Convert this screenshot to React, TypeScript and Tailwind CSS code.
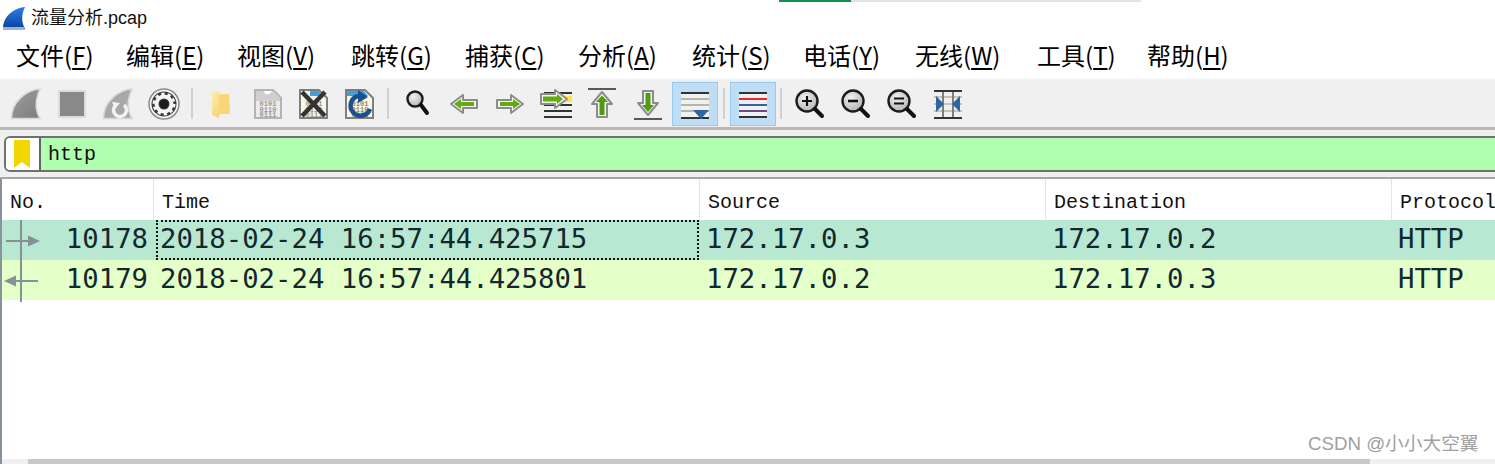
import React from "react";

const Box = ({ children, active, cls = "" }: { children: React.ReactNode; active?: boolean; cls?: string }) => (
  <div className={`w-[46px] h-[44px] flex items-center justify-center shrink-0 border ${active ? "bg-[#bfddf5] border-[#95c9f1]" : "border-transparent"} ${cls}`}>
    <svg width="32" height="32" viewBox="0 0 32 32" className="overflow-visible">{children}</svg>
  </div>
);
const Sep = ({ cls }: { cls: string }) => (
  <div className={`h-[31px] flex justify-center shrink-0 ${cls}`}><div className="w-[2px] bg-[#d0d0d0]" /></div>
);

const FIN = "M30 1 C17 2 1.5 13 1.5 30.5 L30 30.5 C25 22 25 12 30 1 Z";

const Fin = () => (
  <g>
    <defs>
      <linearGradient id="fg" x1="0" y1="0" x2="1" y2="1">
        <stop offset="0" stopColor="#a0a0a0" /><stop offset="1" stopColor="#7c7c7c" />
      </linearGradient>
    </defs>
    <path d={FIN} fill="url(#fg)" stroke="#d8d8d8" strokeWidth="1.6" />
  </g>
);
const Stop = () => (
  <g><rect x="3" y="3" width="26" height="26" fill="#8a8a8a" stroke="#dcdcdc" strokeWidth="2" /></g>
);
const Restart = () => (
  <g>
    <path d={FIN} fill="#a8a8a8" stroke="#d8d8d8" strokeWidth="1.6" />
    <path d="M22 17 A6.5 6.5 0 1 1 13 18" fill="none" stroke="#f2f2f2" strokeWidth="3.5" />
    <path d="M10 14 L18 15 L13 21 Z" fill="#f2f2f2" />
  </g>
);
const Gear = () => (
  <g>
    <circle cx="16" cy="16" r="15" fill="#f5f5f5" stroke="#8c8c8c" strokeWidth="1.5" />
    <circle cx="16" cy="16" r="12.5" fill="#3a3a3a" />
    <circle cx="16" cy="16" r="7.5" fill="none" stroke="#f4f4f4" strokeWidth="4" />
    <circle cx="16" cy="16" r="10" fill="none" stroke="#f4f4f4" strokeWidth="3" strokeDasharray="3.3 3" />
    <circle cx="16" cy="16" r="4.5" fill="#1c1c1c" />
  </g>
);
const Folder = () => (
  <g>
    <defs>
      <linearGradient id="fd" x1="0" y1="0" x2="1" y2="1">
        <stop offset="0" stopColor="#fdeeb0" /><stop offset="1" stopColor="#f5c655" />
      </linearGradient>
    </defs>
    <path d="M6 3 L13 3 L15 6 L23 6 L23 26 L13 26 L13 30 L6 27 Z" fill="url(#fd)" />
    <path d="M13 7 L23 6 L24 26 L13 26 Z" fill="#f8d778" />
  </g>
);
const DocBits = ({ color }: { color: string }) => (
  <text x="16" y="18" fontFamily="'Liberation Mono', monospace" fontSize="7" fontWeight="700" fill={color} textAnchor="middle">
    <tspan x="16" dy="0">0101</tspan>
    <tspan x="16" dy="5.6">0110</tspan>
    <tspan x="16" dy="5.6">0111</tspan>
  </text>
);
const Doc = () => (
  <g>
    <path d="M3 2 L21 2 L29 10 L29 30 L3 30 Z" fill="#ececec" stroke="#b4b4b4" strokeWidth="2" />
    <path d="M4 3 L12 3 C12 8 18 7 20 3 L21 3 L28 10 L28 13 L4 13 Z" fill="#cfcfcf" />
    <path d="M12 3 C12 7 18 7 20 3 Z" fill="#fff" />
    <DocBits color="#9a9a9a" />
  </g>
);
const CloseDoc = () => (
  <g>
    <path d="M2 2 L21 2 L29 10 L29 30 L2 30 Z" fill="#f7f7e4" stroke="#7f7f7f" strokeWidth="2" />
    <path d="M12 3 L21 3 L24 8 L12 8 Z" fill="#3fa0e0" />
    <DocBits color="#9a9a88" />
    <path d="M4 4 L27 28 M27 4 L4 28" stroke="#333" strokeWidth="4.5" />
  </g>
);
const ReloadDoc = () => (
  <g>
    <path d="M2 2 L21 2 L29 10 L29 30 L2 30 Z" fill="#f7f7e4" stroke="#7f7f7f" strokeWidth="2" />
    <path d="M3 3 L20 3 L24 8 L3 8 Z" fill="#3fa0e0" />
    <DocBits color="#8a8a78" />
    <path d="M26 21 A10 10 0 1 1 14 8" fill="none" stroke="#1c4f8f" strokeWidth="4.5" />
    <path d="M14 2 L24 9 L14 15 Z" fill="#1c4f8f" />
  </g>
);
const Lens = ({ children, small }: { children?: React.ReactNode; small?: boolean }) => (
  <g>
    <defs>
      <radialGradient id="ln" cx="0.4" cy="0.35" r="0.8">
        <stop offset="0" stopColor="#f2f2f2" /><stop offset="1" stopColor="#a8a8a8" />
      </radialGradient>
    </defs>
    {small ? (
      <g>
        <circle cx="13" cy="11" r="7.5" fill="url(#ln)" stroke="#1c1c1c" strokeWidth="2.4" />
        <path d="M19 17 L25 25" stroke="#111" strokeWidth="4" strokeLinecap="round" />
      </g>
    ) : (
      <g>
        <circle cx="13" cy="13" r="10.5" fill="url(#ln)" stroke="#1c1c1c" strokeWidth="2.4" />
        <path d="M21 21 L28 28" stroke="#111" strokeWidth="4" strokeLinecap="round" />
      </g>
    )}
    {children}
  </g>
);
const HArrow = ({ dir }: { dir: "l" | "r" }) => (
  <g transform={dir === "l" ? "translate(32 0) scale(-1 1)" : ""}>
    <path d="M3 12 L17 12 L17 7 L29 16 L17 25 L17 20 L3 20 Z" fill="#f4f4f4" stroke="#8c8c8c" strokeWidth="2" strokeLinejoin="round" />
    <path d="M6 14 L19 14 L19 11 L26 16 L19 21 L19 18 L6 18 Z" fill="#62ac0e" />
  </g>
);
const GoTo = () => (
  <g>
    <path d="M4 5 H32 M4 17 H32 M4 23 H32 M4 29 H32" stroke="#2f3436" strokeWidth="2" />
    <rect x="25" y="8" width="7" height="6" fill="#ffe24d" />
    <path d="M1 6 L15 6 L15 2 L27 11 L15 20 L15 16 L1 16 Z" fill="#f4f4f4" stroke="#8c8c8c" strokeWidth="2" strokeLinejoin="round" />
    <path d="M3 8.5 L17 8.5 L17 6 L23 11 L17 16 L17 13.5 L3 13.5 Z" fill="#62ac0e" />
  </g>
);
const UpArrow = () => (
  <g>
    <path d="M2 1 H30" stroke="#2f3436" strokeWidth="1.6" />
    <path d="M16 4 L26 16 L21 16 L21 29 L11 29 L11 16 L6 16 Z" fill="#f4f4f4" stroke="#8c8c8c" strokeWidth="2" strokeLinejoin="round" />
    <path d="M16 7.5 L22 14 L18.5 14 L18.5 27 L13.5 27 L13.5 14 L10 14 Z" fill="#4f9c0c" />
  </g>
);
const DownArrow = () => (
  <g>
    <path d="M2 31 H30" stroke="#2f3436" strokeWidth="1.6" />
    <path d="M16 27 L26 15 L21 15 L21 3 L11 3 L11 15 L6 15 Z" fill="#f4f4f4" stroke="#8c8c8c" strokeWidth="2" strokeLinejoin="round" />
    <path d="M16 24 L22 17 L18.5 17 L18.5 5 L13.5 5 L13.5 17 L10 17 Z" fill="#4f9c0c" />
  </g>
);
const AutoScroll = () => (
  <g>
    <rect x="2" y="5" width="28" height="26" fill="#f0f0f0" />
    <path d="M2 5 H30" stroke="#2f3436" strokeWidth="2" />
    <path d="M2 11 H30 M2 17 H30 M2 23 H30" stroke="#b5b5a8" strokeWidth="2" />
    <path d="M2 30 H30" stroke="#2f3436" strokeWidth="2" />
    <path d="M14 22 L30 22 L22 31 Z" fill="#2f64a5" />
  </g>
);
const Colorize = () => (
  <g>
    <rect x="2" y="4" width="28" height="26" fill="#f0f0f0" />
    <path d="M2 5 H30" stroke="#2f3436" strokeWidth="2" />
    <path d="M2 11 H30" stroke="#e8262c" strokeWidth="2" />
    <path d="M2 17 H30" stroke="#2f64a5" strokeWidth="2" />
    <path d="M2 23 H30" stroke="#6a4a80" strokeWidth="2" />
    <path d="M2 29 H30" stroke="#2f3436" strokeWidth="2" />
  </g>
);
const Resize = () => (
  <g>
    <path d="M2 9 H30 M2 16 H30 M2 23 H30" stroke="#c2c2b8" strokeWidth="2" />
    <path d="M11 3 V29 M21 3 V29" stroke="#7d7d7d" strokeWidth="2" />
    <path d="M2 3 H30 M2 30 H30" stroke="#2f3436" strokeWidth="2" />
    <path d="M4 8 L12 16 L4 24 Z" fill="#2f64a5" />
    <path d="M28 8 L20 16 L28 24 Z" fill="#2f64a5" />
  </g>
);

const menus: [string, string][] = [
  ["文件", "F"], ["编辑", "E"], ["视图", "V"], ["跳转", "G"], ["捕获", "C"], ["分析", "A"],
  ["统计", "S"], ["电话", "Y"], ["无线", "W"], ["工具", "T"], ["帮助", "H"],
];
const menuWidths = [110, 111, 114, 114, 113, 114, 111, 112, 122, 110, 90];

const mono = "font-['DejaVu_Sans_Mono',monospace] text-[27.3px] text-[#12272e] whitespace-pre";
const head = "font-['Liberation_Mono',monospace] text-[20px] text-[#111] whitespace-pre";

const Row = ({ no, time, src, dst, bg, focus, dir }: { no: string; time: string; src: string; dst: string; bg: string; focus?: boolean; dir: "r" | "l" }) => (
  <div className={`grid grid-cols-[154px_543px_346px_346px_1fr] h-[40px] ${bg}`}>
    <div className={`relative pr-[8px] text-right leading-[37px] ${mono}`}>
      {no}
      <svg width="44" height="44" viewBox="0 0 44 44" className="absolute left-0 top-0 overflow-visible">
        {dir === "r" ? (
          <g fill="#879096" stroke="none">
            <rect x="4" y="20" width="22" height="2" />
            <path d="M26 15.5 L38 21 L26 26.5 Z" />
            <rect x="18" y="0" width="2" height="40" />
          </g>
        ) : (
          <g fill="#879096" stroke="none">
            <rect x="14" y="20" width="22" height="2" />
            <path d="M14 15.5 L2 21 L14 26.5 Z" />
            <rect x="18" y="0" width="2" height="42" />
          </g>
        )}
      </svg>
    </div>
    {focus ? (
      <div className={`border-2 border-dotted border-[#111] pl-[2px] leading-[33px] ${mono}`}>{time}</div>
    ) : (
      <div className={`pl-[4px] leading-[37px] ${mono}`}>{time}</div>
    )}
    <div className={`pl-[7px] leading-[37px] ${mono}`}>{src}</div>
    <div className={`pl-[7px] leading-[37px] ${mono}`}>{dst}</div>
    <div className={`pl-[7px] leading-[37px] ${mono}`}>HTTP</div>
  </div>
);

export default function App() {
  return (
    <div className="relative w-[1495px] h-[464px] overflow-hidden bg-white flex flex-col font-['Liberation_Sans','Noto_Sans_CJK_SC',sans-serif]">
      <div className="absolute left-[779px] top-0 w-[72px] h-[2px] bg-[#148f4a]" />
      <div className="absolute left-[851px] top-0 w-[290px] h-[2px] bg-[#e3e3e3]" />

      <div className="h-[36px] flex items-center gap-[6px] pl-[3px] shrink-0">
        <svg width="22" height="23" viewBox="0 0 22 23">
          <defs>
            <linearGradient id="sh" x1="0" y1="0" x2="0" y2="1">
              <stop offset="0" stopColor="#2a7fe6" /><stop offset="1" stopColor="#0b3f9f" />
            </linearGradient>
          </defs>
          <path d="M22 0 C11 1 0 9 0 22 L22 22 C18.5 15 18 8 22 0 Z" fill="url(#sh)" />
          <path d="M0 20 L20.5 20 L22 23 L0 23 Z" fill="#9bb4c8" />
        </svg>
        <span className="text-[18px] leading-none text-[#111] font-['Liberation_Sans','Noto_Sans_CJK_SC',sans-serif]">流量分析.pcap</span>
      </div>

      <nav className="h-[42px] flex items-center pl-[16px] pb-[5px] shrink-0">
        {menus.map(([t, k], i) => (
          <span key={k} style={{ width: menuWidths[i] }} className="shrink-0 text-[24px] leading-none text-black font-['Noto_Sans_CJK_SC',sans-serif]">
            {t}(<span className="underline underline-offset-[3px] decoration-[1.5px]">{k}</span>)
          </span>
        ))}
      </nav>

      <div className="h-[52px] shrink-0 bg-[#f0f0f0] border-t-2 border-[#f6f6f6] border-b-[3px] border-b-[#b9b9b9] flex items-center pl-[3px]">
        <Box><Fin /></Box>
        <Box><Stop /></Box>
        <Box><Restart /></Box>
        <Box><Gear /></Box>
        <Sep cls="w-[12px] pr-[2px]" />
        <Box><Folder /></Box>
        <Box><Doc /></Box>
        <Box><CloseDoc /></Box>
        <Box><ReloadDoc /></Box>
        <Sep cls="w-[12px] pr-[2px]" />
        <Box><Lens small /></Box>
        <Box><HArrow dir="l" /></Box>
        <Box><HArrow dir="r" /></Box>
        <Box><GoTo /></Box>
        <Box><UpArrow /></Box>
        <Box><DownArrow /></Box>
        <div className="w-px shrink-0" />
        <Box active><AutoScroll /></Box>
        <Sep cls="w-[12px]" />
        <Box active><Colorize /></Box>
        <Sep cls="w-[11px] pr-[2px]" />
        <Box><Lens><path d="M8 13 H18 M13 8 V18" stroke="#111" strokeWidth="2.2" /></Lens></Box>
        <Box><Lens><path d="M8 13 H18" stroke="#111" strokeWidth="2.6" /></Lens></Box>
        <Box><Lens><path d="M8 10.5 H18 M8 15.5 H18" stroke="#111" strokeWidth="2.2" /></Lens></Box>
        <Box><Resize /></Box>
      </div>

      <div className="h-[49px] shrink-0 bg-[#f0f0f0] border-b-2 border-[#a6a6a6] flex items-center pl-[4px] -mr-[10px] pt-[1px]">
        <div className="flex-1 h-[36px] rounded-l-[6px] border-2 border-[#707070] bg-[#afffaf] flex overflow-hidden">
          <div className="w-[35px] bg-white border-r-2 border-[#666] flex justify-center items-center pr-[2px] shrink-0">
            <svg width="16" height="28" viewBox="0 0 16 28">
              <path d="M1 0 H15 Q16 0 16 1 V28 L8 22 L0 28 V1 Q0 0 1 0 Z" fill="#f2d600" />
            </svg>
          </div>
          <span className={`pl-[7px] ${head} leading-[34px]`}>http</span>
        </div>
      </div>

      <div className="relative flex-1 border-l-2 border-[#87929c] flex flex-col min-h-0">
        <div className="grid grid-cols-[152px_546px_346px_346px_1fr] h-[41px] shrink-0">
          {["No.", "Time", "Source", "Destination", "Protocol"].map((h, i) => (
            <div key={h} className={`${head} leading-[47px] h-[41px] pl-[8px] ${i < 4 ? "border-r border-[#e4e4e4]" : ""}`}>{h}</div>
          ))}
        </div>
        <Row no="10178" time="2018-02-24 16:57:44.425715" src="172.17.0.3" dst="172.17.0.2" bg="bg-[#b8e8d2]" focus dir="r" />
        <Row no="10179" time="2018-02-24 16:57:44.425801" src="172.17.0.2" dst="172.17.0.3" bg="bg-[#e4ffc7]" dir="l" />
        <div className="flex-1" />
        <div className="h-[5px] shrink-0 bg-[#f0f0f0] flex pl-[26px] pr-[125px]">
          <div className="flex-1 bg-[#c8c8c8]" />
        </div>
      </div>

      <div className="absolute left-[1308px] top-[432px] text-[18.7px] leading-[24px] text-[#a0a0a0] font-['Liberation_Sans','Noto_Sans_CJK_SC',sans-serif] whitespace-pre">CSDN @小小大空翼</div>
    </div>
  );
}
